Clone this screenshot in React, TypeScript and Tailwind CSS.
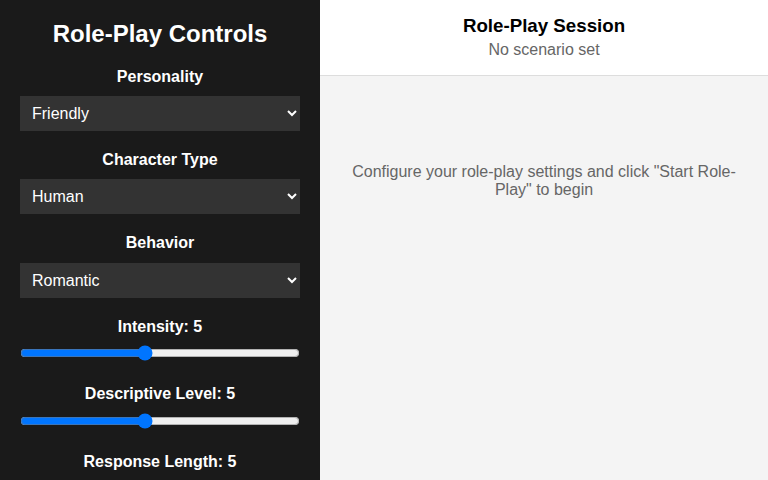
import { useState } from "react";

const Select = ({ value, options, onChange }: { value: string; options: string[]; onChange: (v: string) => void }) => (
  <select
    value={value}
    onChange={(e) => onChange(e.target.value)}
    className="w-full h-[35px] px-[8px] bg-[#333] text-white text-base leading-[1.15] outline-none"
  >
    {options.map((o) => (
      <option key={o}>{o}</option>
    ))}
  </select>
);

const Slider = ({ label, value, onChange }: { label: string; value: number; onChange: (v: number) => void }) => (
  <div className="mb-[24px]">
    <label className="block mb-[9px] font-bold text-center">
      {label}: {value}
    </label>
    <input
      type="range"
      min={1}
      max={10}
      value={value}
      onChange={(e) => onChange(Number(e.target.value))}
      className="block w-full h-4"
    />
  </div>
);

export default function App() {
  const [personality, setPersonality] = useState("Friendly");
  const [character, setCharacter] = useState("Human");
  const [behavior, setBehavior] = useState("Romantic");
  const [intensity, setIntensity] = useState(5);
  const [descriptive, setDescriptive] = useState(5);
  const [length, setLength] = useState(5);

  return (
    <div className="flex h-[480px] w-full overflow-hidden leading-[1.15] font-['Liberation_Sans',Arial,sans-serif]">
      <aside className="w-[320px] shrink-0 bg-[#1a1a1a] text-white p-5 overflow-hidden">
        <h2 className="text-2xl font-bold text-center mb-5 leading-[1.15]">Role-Play Controls</h2>

        <div className="mb-5">
          <label className="block mb-[10px] font-bold text-center">Personality</label>
          <Select value={personality} onChange={setPersonality} options={["Friendly", "Sarcastic", "Serious", "Playful"]} />
        </div>
        <div className="mb-5">
          <label className="block mb-[10px] font-bold text-center">Character Type</label>
          <Select value={character} onChange={setCharacter} options={["Human", "Elf", "Robot", "Vampire"]} />
        </div>
        <div className="mb-5">
          <label className="block mb-[10px] font-bold text-center">Behavior</label>
          <Select value={behavior} onChange={setBehavior} options={["Romantic", "Adventurous", "Mysterious", "Dominant"]} />
        </div>

        <Slider label="Intensity" value={intensity} onChange={setIntensity} />
        <Slider label="Descriptive Level" value={descriptive} onChange={setDescriptive} />
        <Slider label="Response Length" value={length} onChange={setLength} />
      </aside>

      <main className="flex-1 flex flex-col bg-[#f4f4f4]">
        <header className="h-[76px] bg-white border-b border-[#ddd] text-center pt-[15px]">
          <h3 className="text-[18.72px] font-bold text-black leading-[1.15]">Role-Play Session</h3>
          <p className="text-[#666] mt-[4px]">No scenario set</p>
        </header>
        <div className="px-5 pt-[87px] text-center text-[#666]">
          Configure your role-play settings and click "Start Role-Play" to begin
        </div>
      </main>
    </div>
  );
}
